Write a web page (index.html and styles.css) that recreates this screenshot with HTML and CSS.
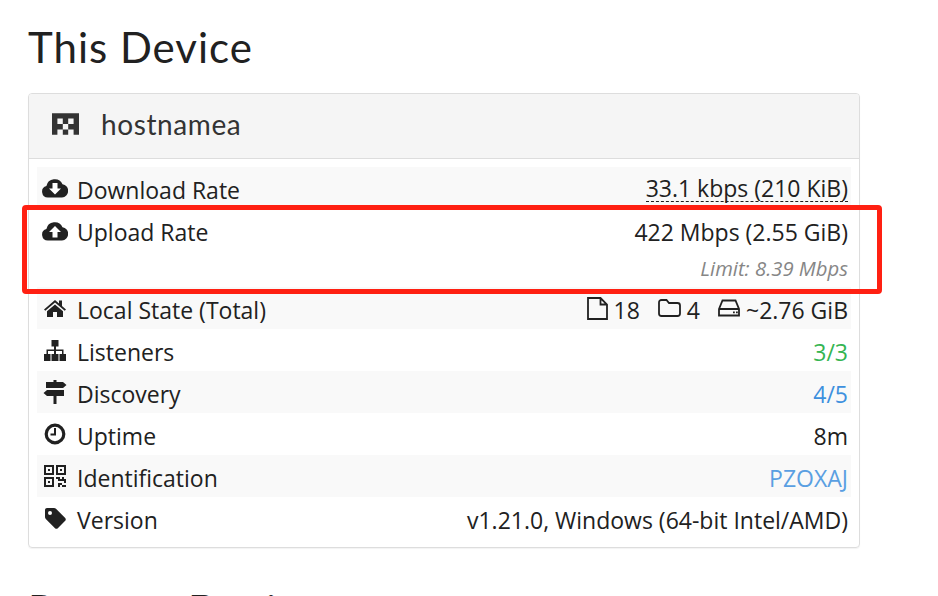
FILE: index.html
```html
<!DOCTYPE html>
<html lang="en">
<head>
<meta charset="utf-8">
<title>This Device</title>
<link rel="stylesheet" href="styles.css">
</head>
<body>
<main class="page">
  <h1 class="title">This Device</h1>
  <section class="panel">
    <header class="panel-head">
      <svg class="identicon" viewBox="0 0 5 4"><path d="M0 0h5v1H0zM0 1h1v1H0zM2 1h1v1H2zM4 1h1v1H4zM0 2h2v1H0zM3 2h2v1H3zM0 3h1v1H0zM2 3h1v1H2zM4 3h1v1H4z"/></svg>
      <span class="hostname">hostnamea</span>
    </header>
    <div class="rows">
      <div class="row striped">
        <span class="label"><span class="ico"><svg width="26" height="20" viewBox="0 0 26 20"><path d="M6 19.500a5.800 5.800 0 0 1-1.600-11.400A8.500 8.500 0 0 1 20.500 6.200a6.700 6.700 0 0 1-.5 13.300z"/><path class="cut" d="M10.500 5h5v5.500h3.500L13 16.500 7 10.500h3.500z"/></svg></span>Download Rate</span>
        <span class="value"><span class="dashed">33.1 kbps (210 KiB)</span></span>
      </div>
      <div class="row tall">
        <div class="line">
          <span class="label"><span class="ico"><svg width="26" height="20" viewBox="0 0 26 20"><path d="M6 19.500a5.800 5.800 0 0 1-1.600-11.400A8.500 8.500 0 0 1 20.500 6.200a6.700 6.700 0 0 1-.5 13.300z"/><path class="cut" d="M13 5l6 6h-3.500v5.500h-5V11H7z"/></svg></span>Upload Rate</span>
          <span class="value">422 Mbps (2.55 GiB)</span>
        </div>
        <div class="limit">Limit: 8.39 Mbps</div>
      </div>
      <div class="row striped">
        <span class="label"><span class="ico"><svg width="24" height="18" viewBox="0 0 24 18"><path d="M12 1L1 10.500l1.300 1.300L12 3.600l9.700 8.200 1.300-1.300-4-3.500V1.500h-3v3z"/><path d="M12 5.500l-8 6.800V18h6v-5h4v5h6v-5.700z"/></svg></span>Local State (Total)</span>
        <span class="value stats">
          <span class="stat"><svg width="21" height="23" viewBox="0 0 21 23"><path class="line-ico" d="M1 1h12.500L20 7.500V22H1zM13.500 1v6.500H20"/></svg>18</span>
          <span class="stat"><svg width="23" height="18" viewBox="0 0 23 18"><path class="line-ico" d="M1 3.500A2.500 2.500 0 0 1 3.500 1h5L11 4h8.500A2.500 2.500 0 0 1 22 6.500v8A2.500 2.500 0 0 1 19.500 17h-16A2.500 2.500 0 0 1 1 14.500z"/></svg>4</span>
          <span class="stat"><svg width="22" height="18" viewBox="0 0 22 18"><path class="line-ico" d="M1 10l3.500-8.500h13L21 10v6.500H1zM1 10h20"/><path d="M15 12.500h1.800v1.800H15zM18 12.500h1.800v1.800H18z"/></svg>~2.76 GiB</span>
        </span>
      </div>
      <div class="row">
        <span class="label"><span class="ico"><svg width="24" height="21" viewBox="0 0 24 21"><path d="M8.500 0h7v6.500h-2.500V9.500h7.500V14H23v7h-6.500v-7h2.500v-3h-6v3H15.500v7h-7v-7H11v-3H5v3h2.500v7H1v-7h2.500V9.500H11v-3H8.500z"/></svg></span>Listeners</span>
        <span class="value ok">3/3</span>
      </div>
      <div class="row striped">
        <span class="label"><span class="ico"><svg width="24" height="24" viewBox="0 0 24 24"><path d="M10.500 0h3v2H20l3.500 3L20 8H3V2h7.500zM4 10h17v6h-7.500v8h-3v-8H4L.5 13z"/></svg></span>Discovery</span>
        <span class="value info">4/5</span>
      </div>
      <div class="row">
        <span class="label"><span class="ico"><svg width="22" height="22" viewBox="0 0 22 22"><circle class="ring" cx="11" cy="11" r="8.800"/><path d="M10 5h2v7.500H6.500v-2H10z"/></svg></span>Uptime</span>
        <span class="value">8m</span>
      </div>
      <div class="row striped">
        <span class="label"><span class="ico"><svg width="22" height="22" viewBox="0 0 22 22"><path fill-rule="evenodd" d="M0 0h10v10H0zM2 2v6h6V2zM4 4h2v2H4zM12 0h10v10H12zM14 2v6h6V2zM16 4h2v2h-2zM0 12h10v10H0zM2 14v6h6v-6zM4 16h2v2H4zM12 12h4v2h2v-2h2v2h2v4h-2v-2h-4v2h2v2h-2v2h-2v-4h2v-2h-2v-2h-2zM18 20h2v2h-2zM20 20h2v2h-2z"/></svg></span>Identification</span>
        <span class="value id">PZOXAJ</span>
      </div>
      <div class="row">
        <span class="label"><span class="ico"><svg width="21" height="21" viewBox="0 0 21 21"><path fill-rule="evenodd" d="M2 0h7c.8 0 1.500.3 2 .8l9.200 9.200c.8.800.8 2 0 2.800l-7.400 7.400c-.8.800-2 .8-2.800 0L.8 11C.3 10.500 0 9.800 0 9V2C0 .9.900 0 2 0zM5 3a2 2 0 1 0 0 4 2 2 0 0 0 0-4z"/></svg></span>Version</span>
        <span class="value">v1.21.0, Windows (64-bit Intel/AMD)</span>
      </div>
    </div>
  </section>
  <h2 class="title next">Remote Devices</h2>
  <div class="highlight"></div>
</main>
</body>
</html>
```
FILE: styles.css
```css
* { box-sizing: border-box; }
html, body { margin: 0; height: 100%; overflow: hidden; background: #fff; }
body {
  font-family: "Open Sans", "Noto Sans", sans-serif;
  color: #212121;
  font-size: 23px;
}
.page { position: relative; width: 832px; margin-left: 28px; }
.title {
  font-family: Lato, "Open Sans", sans-serif;
  font-weight: 400;
  font-size: 42px;
  letter-spacing: 1px;
  line-height: 50px;
  margin: 0;
  padding-top: 22px;
  height: 93px;
  color: #212121;
}
.panel {
  border: 1px solid #ddd;
  border-radius: 4px;
  box-shadow: 0 1px 1px rgba(0, 0, 0, .05);
  padding-bottom: 8px;
}
.panel-head {
  display: flex;
  align-items: center;
  gap: 22px;
  height: 65px;
  padding: 0 0 4px 23px;
  background: #f5f5f5;
  border-bottom: 1px solid #ddd;
  border-radius: 3px 3px 0 0;
}
.identicon { width: 27px; height: 22px; fill: #333; }
.hostname { font-family: Lato, sans-serif; font-size: 28px; letter-spacing: .6px; color: #333; }
.rows { padding: 8px 8px 0; }
.row {
  display: flex;
  justify-content: space-between;
  align-items: center;
  height: 42px;
  padding: 3px 3px 0 5px;
}
.striped { background: #f9f9f9; }
.row.tall { display: block; height: 78px; padding-top: 0; }
.line { display: flex; justify-content: space-between; align-items: center; height: 46px; }
.limit {
  text-align: right;
  font-style: italic;
  font-size: 20.300px;
  color: #868686;
  line-height: 26px;
}
.label { display: flex; align-items: center; }
.ico { display: flex; justify-content: center; width: 26px; margin: -3px 9px 0 0; }
.ico svg { fill: #212121; }
.cut { fill: #fff; }
.ring { fill: none; stroke: #212121; stroke-width: 3.200; }
.line-ico { fill: none; stroke: #212121; stroke-width: 1.800; }
.value { display: flex; align-items: flex-start; }
.dashed { display: block; line-height: 26px; margin-bottom: 3px; border-bottom: 1px dashed #212121; }
.stats { gap: 18px; align-items: center; }
.stat { display: flex; gap: 6px; align-items: center; }
.stat svg { fill: #212121; margin-top: -3px; }
.ok { color: #35b552; }
.info { color: #3d90de; }
.id { color: #5a9fe2; }
.next { height: auto; padding-top: 37px; }
.highlight {
  position: absolute;
  left: -6px;
  top: 205px;
  width: 860px;
  height: 89px;
  border: 5px solid #ff2012;
  border-radius: 4px;
}
```
